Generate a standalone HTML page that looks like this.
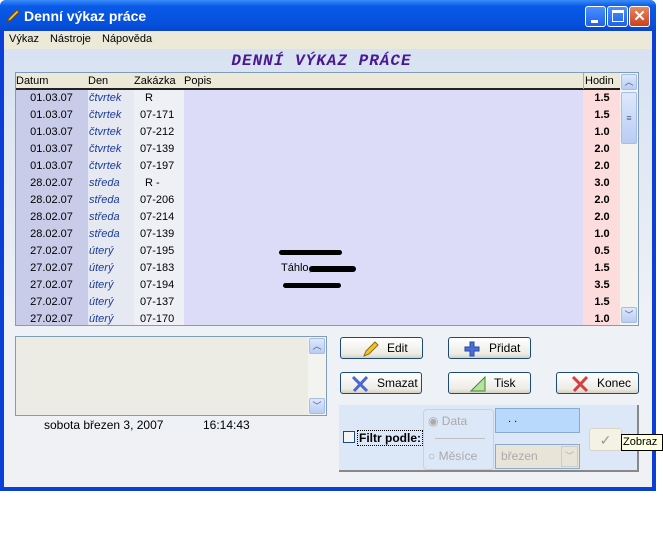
<!DOCTYPE html>
<html><head><meta charset="utf-8"><style>
*{margin:0;padding:0;box-sizing:border-box}
body{width:663px;height:543px;background:#fff;font-family:"Liberation Sans",sans-serif;position:relative;overflow:hidden;font-size:11px}
.win{position:absolute;left:0;top:0;width:656px;height:491px;background:#0a3fd8;border-radius:6px 6px 0 0}
.title{position:absolute;left:0;top:0;width:656px;height:31px;background:linear-gradient(#3a8cf8,#0a5ae8 20%,#0550dc 80%,#0a44c8);border-radius:6px 6px 0 0;color:#fff;font-weight:bold;font-size:14px;line-height:33px;padding-left:24px}
.tb{position:absolute;top:6px;width:21px;height:21px;border:1px solid #fff;border-radius:3px;background:linear-gradient(#4a90ff,#2060e8)}
.menu{position:absolute;left:4px;top:31px;width:648px;height:18px;background:#ece9d8;font-size:11px;line-height:17px}
.menu span{margin-left:5px;margin-right:6px}
.client{position:absolute;left:4px;top:49px;width:648px;height:438px;background:linear-gradient(#d8e2f2,#eef1f6 60%,#eff1f4)}
.h1{position:absolute;left:0;top:52px;width:643px;text-align:center;font-family:"Liberation Mono",monospace;font-weight:bold;font-style:italic;font-size:16px;color:#4a1890;letter-spacing:1px}
.grid{position:absolute;left:15px;top:72px;width:624px;height:254px;border:1px solid #7f9db9;background:#dcdcf8;overflow:hidden}
.hdr{position:absolute;left:0;top:0;width:605px;height:17px;background:#ece9d8;border-bottom:2px solid #222;font-size:11px;line-height:16px}
.hdr span{position:absolute;top:0}
.col{position:absolute;top:17px;bottom:0}
.row{position:absolute;left:0;width:605px;height:17px;font-size:11px;line-height:17px}
.row span{position:absolute}
.d{left:0;width:71px;text-align:center}
.n{left:73px;color:#1a3c9a;font-style:italic}
.z{left:124px}
.h{left:567px;width:38px;text-align:center;font-weight:bold}
.sb{position:absolute;right:0;top:0;width:18px;height:252px;background:#f3f3f0}
.sbb{position:absolute;left:1px;width:16px;height:16px;border:1px solid #a8bce8;border-radius:2px;background:linear-gradient(#dfe8fc,#b8ccf4);color:#4a5e8a;font-size:9px;text-align:center;line-height:14px}
.btn{position:absolute;height:22px;border:1px solid #1c4a7a;border-radius:3px;background:linear-gradient(#fff,#ecebe4 80%,#d6d0c4);font-size:12px;line-height:20px}
.btn span{position:absolute}
.memo{position:absolute;left:15px;top:336px;width:312px;height:80px;border:1px solid #7f9db9;background:#ecebe4}
</style></head><body>
<div class="win"></div>
<div class="title">Denní výkaz práce
<svg style="position:absolute;left:5px;top:8px" width="16" height="16"><path d="M2 14 L4 10 L12 2 L14 4 L6 12 Z" fill="#f4c430" stroke="#6a4a10" stroke-width="1"/></svg>
<div class="tb" style="left:585px"><div style="position:absolute;left:5px;top:13px;width:7px;height:3px;background:#fff"></div></div>
<div class="tb" style="left:607px"><div style="position:absolute;left:4px;top:3px;width:12px;height:12px;border:1px solid #fff;border-top-width:3px"></div></div>
<div class="tb" style="left:629px;background:linear-gradient(#e88860,#c84020);color:#fff;text-align:center;line-height:19px;font-size:15px">✕</div>
</div>
<div class="menu"><span>Výkaz</span><span>Nástroje</span><span>Nápověda</span></div>
<div class="client"></div>
<div class="h1">DENNÍ VÝKAZ PRÁCE</div>
<div class="grid">
<div class="col" style="left:0;width:72px;background:#c8cce8"></div>
<div class="col" style="left:72px;width:46px;background:#e6e8f2"></div>
<div class="col" style="left:118px;width:50px;background:#eef0f6"></div>
<div class="col" style="left:567px;width:38px;background:#fcdcdc"></div>
<div class="hdr"><span style="left:0">Datum</span><span style="left:72px">Den</span><span style="left:118px">Zakázka</span><span style="left:168px">Popis</span><span style="left:567px;border-left:1px solid #aaa;padding-left:1px">Hodin</span></div>
<div class="row" style="top:17px"><span class="d">01.03.07</span><span class="n">čtvrtek</span><span class="z" style="left:129px">R</span><span class="h">1.5</span></div>
<div class="row" style="top:34px"><span class="d">01.03.07</span><span class="n">čtvrtek</span><span class="z">07-171</span><span class="h">1.5</span></div>
<div class="row" style="top:51px"><span class="d">01.03.07</span><span class="n">čtvrtek</span><span class="z">07-212</span><span class="h">1.0</span></div>
<div class="row" style="top:68px"><span class="d">01.03.07</span><span class="n">čtvrtek</span><span class="z">07-139</span><span class="h">2.0</span></div>
<div class="row" style="top:85px"><span class="d">01.03.07</span><span class="n">čtvrtek</span><span class="z">07-197</span><span class="h">2.0</span></div>
<div class="row" style="top:102px"><span class="d">28.02.07</span><span class="n">středa</span><span class="z" style="left:129px">R -</span><span class="h">3.0</span></div>
<div class="row" style="top:119px"><span class="d">28.02.07</span><span class="n">středa</span><span class="z">07-206</span><span class="h">2.0</span></div>
<div class="row" style="top:136px"><span class="d">28.02.07</span><span class="n">středa</span><span class="z">07-214</span><span class="h">2.0</span></div>
<div class="row" style="top:153px"><span class="d">28.02.07</span><span class="n">středa</span><span class="z">07-139</span><span class="h">1.0</span></div>
<div class="row" style="top:170px"><span class="d">27.02.07</span><span class="n">úterý</span><span class="z">07-195</span><span style="left:263px;top:7px;width:63px;height:5px;background:#000;border-radius:3px"></span><span class="h">0.5</span></div>
<div class="row" style="top:187px"><span class="d">27.02.07</span><span class="n">úterý</span><span class="z">07-183</span><span style="left:265px">Táhlo,</span><span style="left:293px;top:6px;width:47px;height:6px;background:#000;border-radius:3px"></span><span class="h">1.5</span></div>
<div class="row" style="top:204px"><span class="d">27.02.07</span><span class="n">úterý</span><span class="z">07-194</span><span style="left:267px;top:6px;width:58px;height:5px;background:#000;border-radius:3px"></span><span class="h">3.5</span></div>
<div class="row" style="top:221px"><span class="d">27.02.07</span><span class="n">úterý</span><span class="z">07-137</span><span class="h">1.5</span></div>
<div class="row" style="top:238px"><span class="d">27.02.07</span><span class="n">úterý</span><span class="z">07-170</span><span class="h">1.0</span></div>
<div class="sb"><div class="sbb" style="top:1px">︿</div><div class="sbb" style="top:19px;height:52px;line-height:50px">≡</div><div class="sbb" style="top:234px">﹀</div></div>
</div>
<div class="memo"><div class="sb" style="height:78px;background:#f3f3f0"><div class="sbb" style="top:1px">︿</div><div class="sbb" style="top:61px">﹀</div></div></div>
<div style="position:absolute;left:44px;top:418px;font-size:12px">sobota březen 3, 2007</div>
<div style="position:absolute;left:203px;top:418px;font-size:12px">16:14:43</div>

<div class="btn" style="left:340px;top:337px;width:83px"><svg style="position:absolute;left:20px;top:2px" width="18" height="18"><path d="M3 16 L5 11 L14 2 L17 5 L8 14 Z" fill="#f4c430" stroke="#8a6a10"/></svg><span style="left:46px">Edit</span></div>
<div class="btn" style="left:448px;top:337px;width:83px"><svg style="position:absolute;left:14px;top:2px" width="18" height="18"><path d="M7 2h4v5h5v4h-5v5H7v-5H2V7h5z" fill="#4a70d8" stroke="#2a4aa0"/></svg><span style="left:40px">Přidat</span></div>
<div class="btn" style="left:340px;top:372px;width:82px"><svg style="position:absolute;left:10px;top:2px" width="18" height="18"><path d="M2 2 L16 16 M16 2 L3 16" stroke="#4a68d0" stroke-width="3"/></svg><span style="left:36px">Smazat</span></div>
<div class="btn" style="left:448px;top:372px;width:83px"><svg style="position:absolute;left:20px;top:2px" width="18" height="18"><path d="M2 16 L16 2 L16 16 Z" fill="#b8e0a0" stroke="#3a8a30"/></svg><span style="left:45px">Tisk</span></div>
<div class="btn" style="left:556px;top:372px;width:83px"><svg style="position:absolute;left:14px;top:2px" width="18" height="18"><path d="M2 2 L16 16 M16 2 L3 16" stroke="#d84040" stroke-width="3"/></svg><span style="left:40px">Konec</span></div>

<div style="position:absolute;left:339px;top:405px;width:300px;height:67px;background:#dce8f8;border-right:2px solid #888;border-bottom:2px solid #888"></div>
<div style="position:absolute;left:343px;top:431px;width:12px;height:12px;border:1px solid #1c4a7a;background:#f4f4f4"></div>
<div style="position:absolute;left:357px;top:430px;font-weight:bold;font-size:12px;border:1px dotted #000;padding:0 1px">Filtr podle:</div>
<div style="position:absolute;left:423px;top:409px;width:71px;height:61px;border:1px solid #d0d0d0;border-radius:4px"></div>
<div style="position:absolute;left:428px;top:414px;color:#aaa;font-size:12px">◉ Data</div>
<div style="position:absolute;left:435px;top:438px;width:50px;height:1px;background:#c0c0c0"></div>
<div style="position:absolute;left:428px;top:449px;color:#aaa;font-size:12px">○ Měsíce</div>
<div style="position:absolute;left:495px;top:408px;width:85px;height:25px;background:#b8d8fc;border:1px solid #8aaad0;text-align:left;padding-left:12px;line-height:20px">. .</div>
<div style="position:absolute;left:495px;top:444px;width:85px;height:25px;background:#e8e4d8;border:1px solid #8aaad0;color:#aaa;font-size:12px;line-height:22px;padding-left:5px">březen<span style="position:absolute;right:1px;top:1px;width:17px;height:21px;border:1px solid #ccc;text-align:center;line-height:19px;font-size:9px">﹀</span></div>
<div style="position:absolute;left:589px;top:428px;width:33px;height:23px;border:1px solid #d8d4c8;border-radius:3px;background:#f4f2e4;color:#999;text-align:center;font-size:14px;line-height:22px">✓</div>
<div style="position:absolute;left:621px;top:434px;width:42px;height:17px;background:#ffffe1;border:1px solid #000;font-size:11px;line-height:15px;padding-left:1px">Zobraz</div>
</body></html>
